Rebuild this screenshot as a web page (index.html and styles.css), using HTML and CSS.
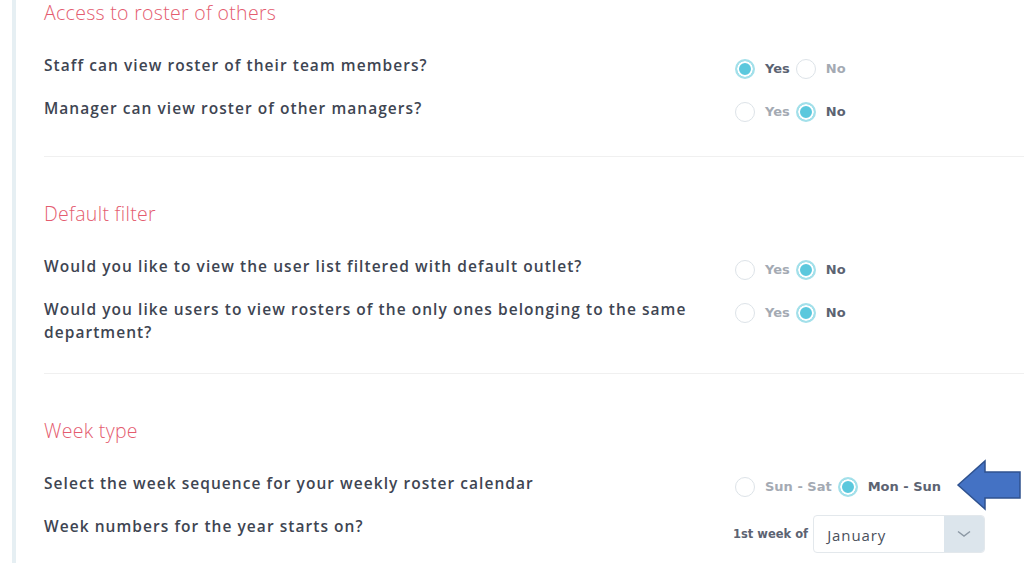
FILE: index.html
```html
<!DOCTYPE html>
<html lang="en">
<head>
    <meta charset="UTF-8">
    <title>Roster settings</title>
    <link rel="stylesheet" href="styles.css">
</head>
<body>
    <div class="settings">
        <!-- Access to roster of others -->
        <section class="group first">
            <h2>Access to roster of others</h2>
            <div class="row">
                <div class="question">Staff can view roster of their team members?</div>
                <div class="options">
                    <span class="radio checked"></span><span class="opt on">Yes</span>
                    <span class="radio"></span><span class="opt">No</span>
                </div>
            </div>
            <div class="row">
                <div class="question">Manager can view roster of other managers?</div>
                <div class="options">
                    <span class="radio"></span><span class="opt">Yes</span>
                    <span class="radio checked"></span><span class="opt on">No</span>
                </div>
            </div>
        </section>

        <!-- Default filter -->
        <section class="group">
            <h2>Default filter</h2>
            <div class="row">
                <div class="question">Would you like to view the user list filtered with default outlet?</div>
                <div class="options">
                    <span class="radio"></span><span class="opt">Yes</span>
                    <span class="radio checked"></span><span class="opt on">No</span>
                </div>
            </div>
            <div class="row">
                <div class="question">Would you like users to view rosters of the only ones belonging to the same department?</div>
                <div class="options">
                    <span class="radio"></span><span class="opt">Yes</span>
                    <span class="radio checked"></span><span class="opt on">No</span>
                </div>
            </div>
        </section>

        <!-- Week type -->
        <section class="group last">
            <h2>Week type</h2>
            <div class="row">
                <div class="question">Select the week sequence for your weekly roster calendar</div>
                <div class="options">
                    <span class="radio"></span><span class="opt">Sun - Sat</span>
                    <span class="radio checked"></span><span class="opt on">Mon - Sun</span>
                </div>
            </div>
            <div class="row">
                <div class="question">Week numbers for the year starts on?</div>
                <div class="options select-row">
                    <span class="week-label">1st week of</span>
                    <div class="select">
                        <span class="select-value">January</span>
                        <span class="select-btn">
                            <svg width="14" height="8" viewBox="0 0 14 8"><path d="M1 1.5l6 4.5 6-4.5" fill="none" stroke="#8d99a5" stroke-width="1.5"/></svg>
                        </span>
                    </div>
                </div>
            </div>
        </section>
    </div>

    <!-- annotation arrow -->
    <svg class="arrow" width="66" height="52" viewBox="0 0 66 52">
        <path d="M2 26L29 2V13H64V39H29V50Z" fill="#4472c4" stroke="#2f528f" stroke-width="1.5"/>
    </svg>
</body>
</html>
```

FILE: styles.css
```css
body { margin: 0; background: #fff; font-family: "Open Sans", sans-serif; }

.settings {
    margin-left: 12px;
    border-left: 4px solid #e6eff3;
    padding-left: 28px;
    min-height: 563px;
}

.group {
    border-bottom: 1px solid #f0f0f0;
    padding-top: 45px;
    padding-bottom: 29px;
}
.group.first { padding-top: 1px; padding-bottom: 36px; }
.group.last { border-bottom: none; }

h2 {
    margin: 0;
    font-size: 19.5px;
    font-weight: 300;
    letter-spacing: 0.3px;
    color: #e45c6f;
    line-height: 24px;
}

.row {
    display: flex;
    align-items: flex-start;
    margin-top: 20px;
}
h2 + .row { margin-top: 29px; }

.question {
    width: 691px;
    font-size: 15.5px;
    font-weight: 600;
    letter-spacing: 1.05px;
    color: #3e4552;
    line-height: 23px;
}

/* radio group sits a little lower than the question text */
.options {
    display: flex;
    align-items: center;
    height: 23px;
    margin: 3px 0 -3px;
    font-family: "DejaVu Sans", sans-serif;
    font-size: 13px;
    font-weight: bold;
}

.radio {
    width: 20px;
    height: 20px;
    border: 1px solid #dde3e8;
    border-radius: 50%;
    box-sizing: border-box;
    margin-right: 10px;
    background: #fff;
}
.radio.checked {
    border: 2px solid #a3e0ea;
    background: #5bc8dd;
    box-shadow: inset 0 0 0 2px #fff;
}

.opt { color: #a4aab3; margin-right: 6px; }
.opt.on { color: #5c6372; }

.select-row { height: 38px; margin: 0 0 0 -2px; }

.week-label {
    font-size: 11.5px;
    color: #5c6372;
    margin-right: 5px;
}

.select {
    display: flex;
    width: 172px;
    height: 38px;
    border: 1px solid #e3e8ec;
    border-radius: 4px;
    box-sizing: border-box;
    overflow: hidden;
}
.select-value {
    flex: 1;
    display: flex;
    align-items: center;
    padding: 2px 0 0 13px;
    font-family: "Open Sans", sans-serif;
    font-weight: normal;
    font-size: 15px;
    color: #4a505c;
    letter-spacing: 0.9px;
}
.select-btn {
    width: 40px;
    background: #dce5ec;
    display: flex;
    align-items: center;
    justify-content: center;
}

.arrow { position: absolute; left: 956px; top: 459px; }
```
